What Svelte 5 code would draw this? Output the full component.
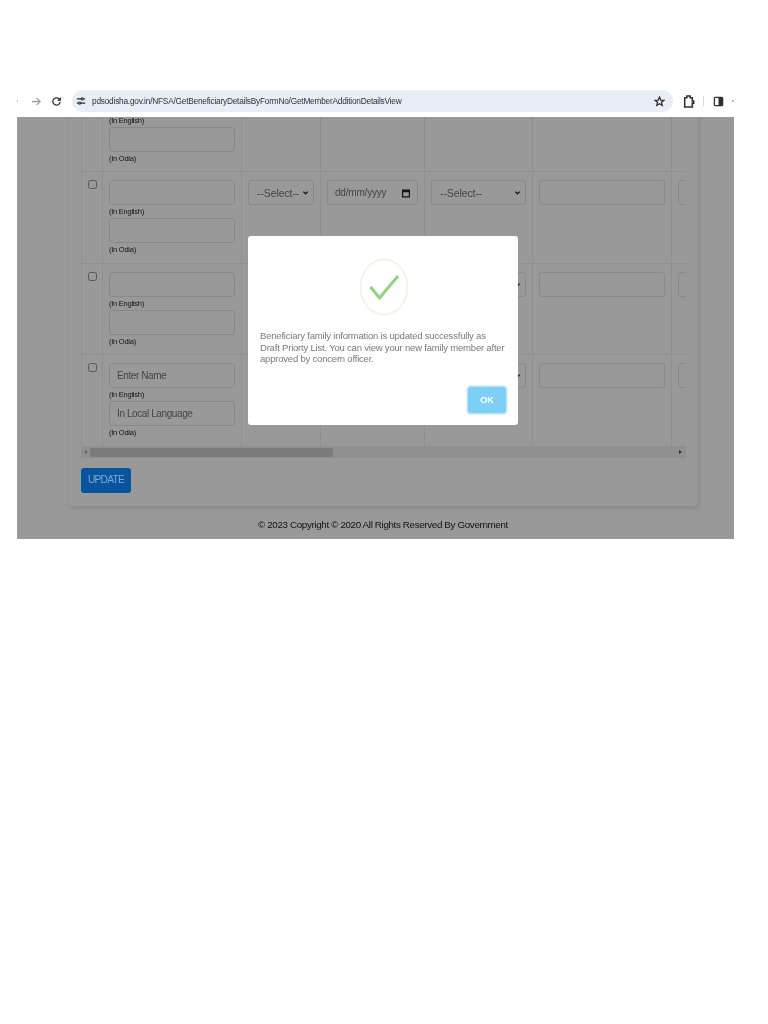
<script>
  const rows = [
    { name: '', local: '', scrolledOff: true },
    { name: '', local: '', scrolledOff: false },
    { name: '', local: '', scrolledOff: false },
    { name: 'Enter Name', local: 'In Local Language', scrolledOff: false }
  ];
</script>

<div class="stage">
  <header class="bar">
    <svg class="back" viewBox="0 0 12 12" aria-hidden="true"><path d="M11 6H2M6 2 2 6l4 4" /></svg>
    <svg class="forward" viewBox="0 0 12 12" aria-hidden="true"><path d="M1 6h9M6 2l4 4-4 4" /></svg>
    <svg class="reload" viewBox="0 0 12 12" aria-hidden="true"><path d="M10 6.200A4 4 0 1 1 8.800 3.100L10 4.300" /><path class="solid" d="M10.800 1v4.200H6.600z" /></svg>
    <div class="omni">
      <svg class="tune" viewBox="0 0 12 12" aria-hidden="true"><path d="M1 3.500h5M9 3.500h2M1 8.500h2M6 8.500h5" /><circle cx="7.500" cy="3.500" r="1.300" /><circle cx="4.500" cy="8.500" r="1.300" /></svg>
      <span class="url">pdsodisha.gov.in/NFSA/GetBeneficiaryDetailsByFormNo/GetMemberAdditionDetailsView</span>
      <svg class="star" viewBox="0 0 12 12" aria-hidden="true"><path d="M6 1.200 7.400 4.400l3.400.3-2.600 2.200.8 3.400L6 8.500 3 10.300l.8-3.400L1.200 4.700l3.400-.3z" /></svg>
    </div>
    <svg class="puzzle" viewBox="0 0 12 12" aria-hidden="true"><path d="M2.500 2.500h2V1h3v1.500h2v3h1.300v2H9.500v3.500h-7z" /></svg>
    <span class="divider"></span>
    <svg class="panel" viewBox="0 0 12 12" aria-hidden="true"><rect x="1.500" y="1.500" width="9" height="9" rx="1" /><rect class="solid" x="6" y="1.500" width="4.500" height="9" /></svg>
    <span class="dot"></span>
  </header>

  <main class="page">
    <div class="scrolled">
      <section class="card">
        <div class="table">
          {#each rows as row}
            <div class="row">
              <div class="cell check">{#if !row.scrolledOff}<input type="checkbox" />{/if}</div>
              <div class="cell names">
                <input class="field" type="text" placeholder={row.name} />
                <small>(In English)</small>
                <input class="field" type="text" placeholder={row.local} />
                <small>(In Odia)</small>
              </div>
              {#if row.scrolledOff}
                <div class="cell"></div>
                <div class="cell"></div>
                <div class="cell"></div>
                <div class="cell"></div>
                <div class="cell"></div>
              {:else}
                <div class="cell"><div class="field picker"><span>--Select--</span><svg viewBox="0 0 8 8" aria-hidden="true"><path d="M1.500 3 4 5.500 6.500 3" /></svg></div></div>
                <div class="cell"><div class="field picker date"><span>dd/mm/yyyy</span><svg viewBox="0 0 10 10" aria-hidden="true"><path class="cal" d="M1 1.500h8V9.500H1zM2.200 4.200v4.100h5.600V4.200z" /></svg></div></div>
                <div class="cell"><div class="field picker"><span>--Select--</span><svg viewBox="0 0 8 8" aria-hidden="true"><path d="M1.500 3 4 5.500 6.500 3" /></svg></div></div>
                <div class="cell"><input class="field" type="text" /></div>
                <div class="cell last"><input class="field stub" type="text" /></div>
              {/if}
            </div>
          {/each}
          <div class="scrollbar">
            <span class="arrow left"></span>
            <span class="thumb"></span>
            <span class="arrow right"></span>
          </div>
        </div>
        <button class="update">UPDATE</button>
      </section>
      <footer class="copy">© 2023 Copyright © 2020 All Rights Reserved By Government</footer>
    </div>

    <div class="overlay"></div>

    <div class="modal">
      <svg class="tick" viewBox="0 0 50 58" aria-hidden="true">
        <ellipse cx="25" cy="29" rx="23.500" ry="27.500" />
        <path d="M11.500 29 20.500 40 39 18" />
      </svg>
      <p>Beneficiary family information is updated successfully as<br />Draft Priorty List. You can view your new family member after<br />approved by concern officer.</p>
      <div class="actions"><button class="ok">OK</button></div>
    </div>
  </main>
</div>

<style>
  :global(body) {
    margin: 0;
    background: #fff;
  }
  .stage {
    width: 717px;
    margin: 88px 0 0 17px;
    font-family: "Liberation Sans", Arial, sans-serif;
    filter: blur(0.4px);
  }
  .bar {
    height: 29px;
    display: flex;
    align-items: center;
    overflow: hidden;
    background: #fff;
  }
  .bar svg {
    flex: none;
    fill: none;
    stroke: #2b2e31;
    stroke-width: 1.400;
  }
  .bar .solid {
    fill: #2b2e31;
    stroke: none;
  }
  .back {
    width: 12px;
    height: 12px;
    margin-left: -10px;
    margin-top: -3px;
    opacity: 0.4;
  }
  .forward {
    width: 11px;
    height: 11px;
    margin-left: 12px;
    margin-top: -3px;
    opacity: 0.45;
  }
  .reload {
    width: 11px;
    height: 11px;
    margin-left: 9px;
    margin-top: -3px;
  }
  .omni {
    width: 601px;
    height: 22px;
    margin-left: 10px;
    margin-top: -3px;
    flex: none;
    box-sizing: border-box;
    padding: 0 7px 0 4px;
    border-radius: 11px;
    background: #e9edf7;
    display: flex;
    align-items: center;
  }
  .tune {
    width: 10px;
    height: 10px;
  }
  .url {
    margin-left: 6px;
    font-size: 8.300px;
    letter-spacing: -0.22px;
    color: #2e3135;
    white-space: nowrap;
  }
  .star {
    width: 11px;
    height: 11px;
    margin-left: auto;
    margin-right: 1px;
  }
  .puzzle {
    width: 13px;
    height: 13px;
    margin-left: 9px;
    margin-top: -3px;
  }
  .divider {
    width: 1px;
    height: 10px;
    margin-left: 8px;
    margin-top: -3px;
    background: #d5d8dd;
  }
  .panel {
    width: 11px;
    height: 11px;
    margin-left: 9px;
    margin-top: -3px;
  }
  .dot {
    width: 2px;
    height: 2px;
    margin-left: 8px;
    margin-top: -3px;
    border-radius: 50%;
    background: #8ea2d8;
    flex: none;
  }

  .page {
    position: relative;
    height: 422px;
    overflow: hidden;
    background: #fff;
  }
  .scrolled {
    margin-top: -37px;
    padding-top: 1px;
  }
  .card {
    width: 629px;
    height: 425px;
    margin-left: 52px;
    box-sizing: border-box;
    padding: 0 12px;
    background: #fff;
    border-radius: 4px;
    box-shadow: 1px 2px 5px rgba(0, 0, 0, 0.14);
  }
  .table {
    width: 605px;
    overflow: hidden;
  }
  .row {
    display: grid;
    grid-template-columns: 21px 139px 79px 104px 108px 139px 15px;
    height: 91.300px;
    box-sizing: border-box;
    border-bottom: 1px solid #eceef0;
  }
  .row:nth-child(4) {
    border-bottom: 0;
  }
  .cell {
    border-left: 1px solid #eceef0;
    box-sizing: border-box;
    padding: 8px 6px 0;
    min-width: 0;
    overflow: hidden;
  }
  .check {
    padding: 8px 0 0;
    display: flex;
    justify-content: center;
    align-items: flex-start;
  }
  .check input {
    width: 9px;
    height: 9px;
    margin: 0;
    opacity: 0.8;
  }
  .names {
    display: flex;
    flex-direction: column;
  }
  .last {
    padding-right: 0;
  }
  .field {
    display: block;
    width: 100%;
    height: 25px;
    box-sizing: border-box;
    padding: 0 7px;
    border: 1px solid #e2e4e6;
    border-radius: 3px;
    background: #fff;
    font: 10px "Liberation Sans", Arial, sans-serif;
    letter-spacing: -0.4px;
    color: #6c757d;
  }
  .field::placeholder {
    color: #6c757d;
  }
  .picker {
    display: flex;
    align-items: center;
    justify-content: space-between;
    padding: 0 4px 0 8px;
    font-size: 10.500px;
    letter-spacing: -0.1px;
  }
  .picker svg {
    width: 7px;
    height: 7px;
    flex: none;
    fill: none;
    stroke: #212529;
    stroke-width: 1.500;
  }
  .date {
    padding: 0 6px 0 7px;
    font-size: 10px;
    letter-spacing: -0.2px;
  }
  .date svg {
    width: 10px;
    height: 10px;
    stroke: none;
  }
  .cal {
    fill: #212529;
    fill-rule: evenodd;
  }
  .stub {
    width: 60px;
  }
  small {
    display: block;
    height: 13px;
    flex: none;
    font-size: 7.500px;
    line-height: 13px;
    letter-spacing: -0.25px;
    color: #212529;
  }
  .scrollbar {
    height: 12px;
    display: flex;
    align-items: center;
    background: #f1f1f1;
  }
  .thumb {
    width: 243px;
    height: 9px;
    margin-left: 4px;
    background: #cdcdcd;
  }
  .arrow {
    width: 0;
    height: 0;
    border-top: 2px solid transparent;
    border-bottom: 2px solid transparent;
  }
  .arrow.left {
    margin-left: 3px;
    margin-right: -1px;
    border-right: 3px solid #a3a3a3;
  }
  .arrow.right {
    margin-left: auto;
    margin-right: 4px;
    border-left: 3px solid #505050;
  }
  .update {
    position: relative;
    z-index: 1;
    display: block;
    width: 50px;
    height: 25px;
    margin-top: 10px;
    padding: 0 0 2px;
    border: 0;
    border-radius: 3px;
    background: #07559f;
    color: #85a8d0;
    font: 10.200px "Liberation Sans", Arial, sans-serif;
    letter-spacing: -0.75px;
  }
  .copy {
    margin-top: 12px;
    padding-left: 241px;
    font-size: 9.800px;
    line-height: 13px;
    letter-spacing: -0.35px;
    color: #212529;
    white-space: nowrap;
  }

  .overlay {
    position: absolute;
    inset: 0;
    background: rgba(0, 0, 0, 0.4);
  }
  .modal {
    position: absolute;
    z-index: 2;
    left: 231px;
    top: 119px;
    width: 270px;
    height: 189px;
    box-sizing: border-box;
    padding: 22px 12px 0;
    background: #fff;
    border-radius: 3px;
    display: flex;
    flex-direction: column;
  }
  .tick {
    width: 50px;
    height: 58px;
    margin-left: 99px;
    flex: none;
    fill: none;
  }
  .tick ellipse {
    stroke: #edf7e6;
    stroke-width: 2;
  }
  .tick path {
    stroke: #91d27d;
    stroke-width: 3;
  }
  .modal p {
    margin: 14px 0 0;
    font-size: 9.500px;
    line-height: 11.700px;
    letter-spacing: -0.2px;
    color: #797979;
    white-space: nowrap;
  }
  .actions {
    margin-top: auto;
    padding-bottom: 12px;
    display: flex;
    justify-content: flex-end;
  }
  .ok {
    width: 38px;
    height: 26px;
    padding: 0;
    border: 0;
    border-radius: 3px;
    background: #7ecff5;
    box-shadow: 0 0 0 1.500px #bde6f7;
    color: #fff;
    font: bold 9px "Liberation Sans", Arial, sans-serif;
  }
</style>
